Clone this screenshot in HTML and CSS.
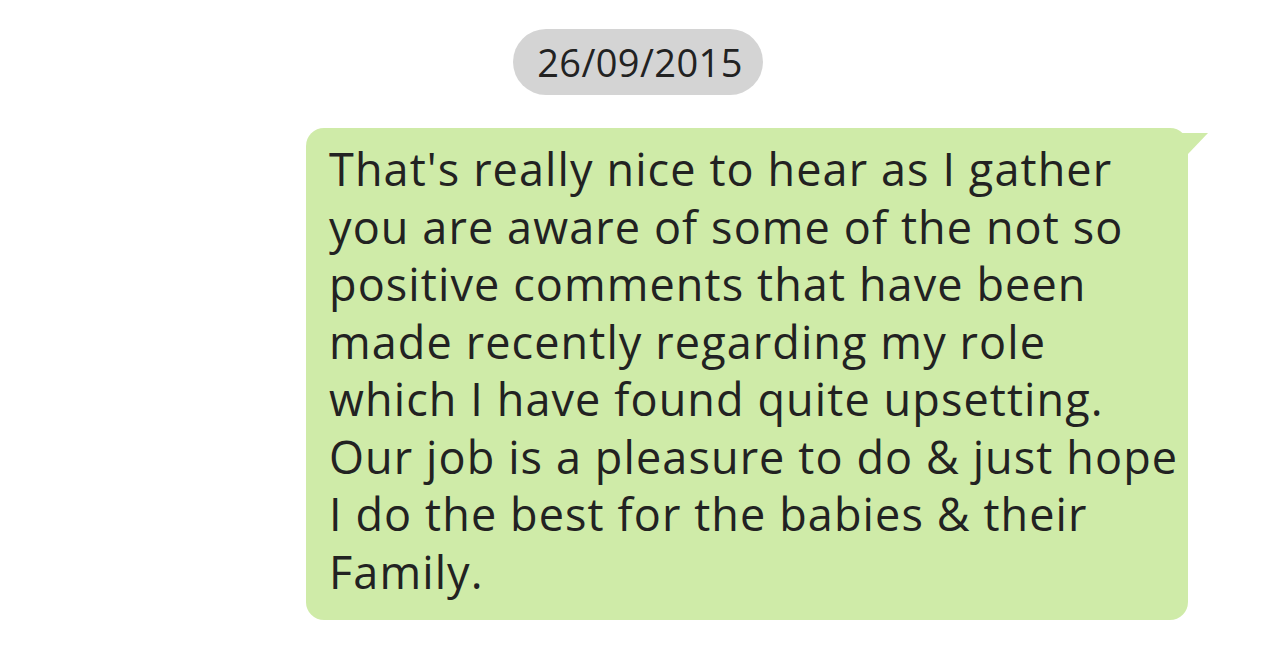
FILE: index.html
```html
<!DOCTYPE html>
<html>
<head>
<meta charset="utf-8">
<link rel="stylesheet" href="styles.css">
</head>
<body>
<div class="chat">
  <div class="date-row"><span class="date">26/09/2015</span></div>
  <div class="msg-row">
    <div class="bubble">
      <p class="text">That's really nice to hear as I gather<br>you are aware of some of the not so<br>positive comments that have been<br>made recently regarding my role<br>which I have found quite upsetting.<br>Our job is a pleasure to do &amp; just hope<br>I do the best for the babies &amp; their<br>Family.</p>
      <svg class="tail" width="26" height="24" viewBox="0 0 26 24"><path d="M0 0 H26 L6 21 H0 Z" fill="#cfeba8"/></svg>
    </div>
  </div>
</div>
</body>
</html>
```
FILE: styles.css
```css
html, body {
  margin: 0;
  padding: 0;
  background: #ffffff;
}
body {
  font-family: "Open Sans", "Noto Sans", sans-serif;
  color: #222222;
}
.chat {
  display: flex;
  flex-direction: column;
  padding-top: 29px;
}
.date-row {
  display: flex;
  justify-content: center;
}
.date {
  display: inline-flex;
  align-items: center;
  justify-content: center;
  height: 66px;
  width: 250px;
  box-sizing: border-box;
  padding-left: 4px;
  border-radius: 33px;
  background: #d4d4d4;
  font-size: 38px;
  letter-spacing: 0.4px;
  color: #222222;
  margin-left: -4px;
}
.msg-row {
  display: flex;
  justify-content: flex-end;
  padding-right: 92px;
  margin-top: 33px;
}
.bubble {
  position: relative;
  width: 882px;
  box-sizing: border-box;
  background: #cfeba8;
  border-radius: 18px;
  padding: 12px 10px 20px 23px;
}
.text {
  margin: 0;
  font-size: 45px;
  line-height: 57.5px;
  letter-spacing: 1.1px;
  white-space: nowrap;
}
.tail {
  position: absolute;
  top: 5px;
  right: -20px;
  display: block;
}
```
